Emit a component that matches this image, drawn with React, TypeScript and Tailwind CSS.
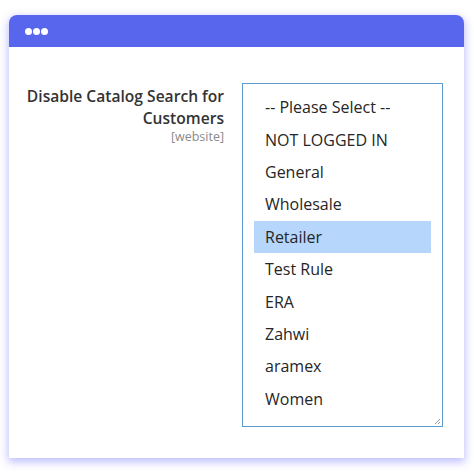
import React from 'react';

const options = [
    '-- Please Select --',
    'NOT LOGGED IN',
    'General',
    'Wholesale',
    'Retailer',
    'Test Rule',
    'ERA',
    'Zahwi',
    'aramex',
    'Women',
];

const App: React.FC = () => {
    const selected = 'Retailer';

    return (
        <div className="w-[474px] h-[474px] bg-white pt-[15px] pl-[9px]" style={{ fontFamily: '"Open Sans", "Liberation Sans", sans-serif' }}>
            <div className="w-[455px] h-[443px] bg-white rounded-t-[8px] shadow-[0_3px_8px_1px_rgba(110,110,255,0.45)] flex flex-col">
                <div className="h-[32px] bg-[#5866ee] rounded-t-[8px] flex items-center pl-[16px] gap-[1px]">
                    <span className="w-[7px] h-[7px] rounded-full bg-white" />
                    <span className="w-[7px] h-[7px] rounded-full bg-white" />
                    <span className="w-[7px] h-[7px] rounded-full bg-white" />
                </div>
                <div className="flex pt-[36px]">
                    <div className="w-[215px] text-right pt-[2px]">
                        <div className="text-[15.6px] leading-[22px] font-semibold text-[#333]">
                            Disable Catalog Search for Customers
                        </div>
                        <div className="text-[12.5px] leading-[15px] text-[#8a8a8a]">[website]</div>
                    </div>
                    <div className="ml-[18px] relative w-[201px] h-[344px] border border-[#5b9bcf] bg-white pt-[7px] px-[11px]">
                        {options.map((opt) => (
                            <div
                                key={opt}
                                className={`h-[32.4px] flex items-center pl-[11px] text-[16px] text-[#262626] ${opt === selected ? 'bg-[#b6d6fc]' : ''}`}
                            >
                                {opt}
                            </div>
                        ))}
                        <svg className="absolute right-[1px] bottom-[1px]" width="8" height="8" viewBox="0 0 8 8">
                            <path d="M7 2 L2 7 M7 5 L5 7" stroke="#999" strokeWidth="1" />
                        </svg>
                    </div>
                </div>
            </div>
        </div>
    );
};

export default App;
